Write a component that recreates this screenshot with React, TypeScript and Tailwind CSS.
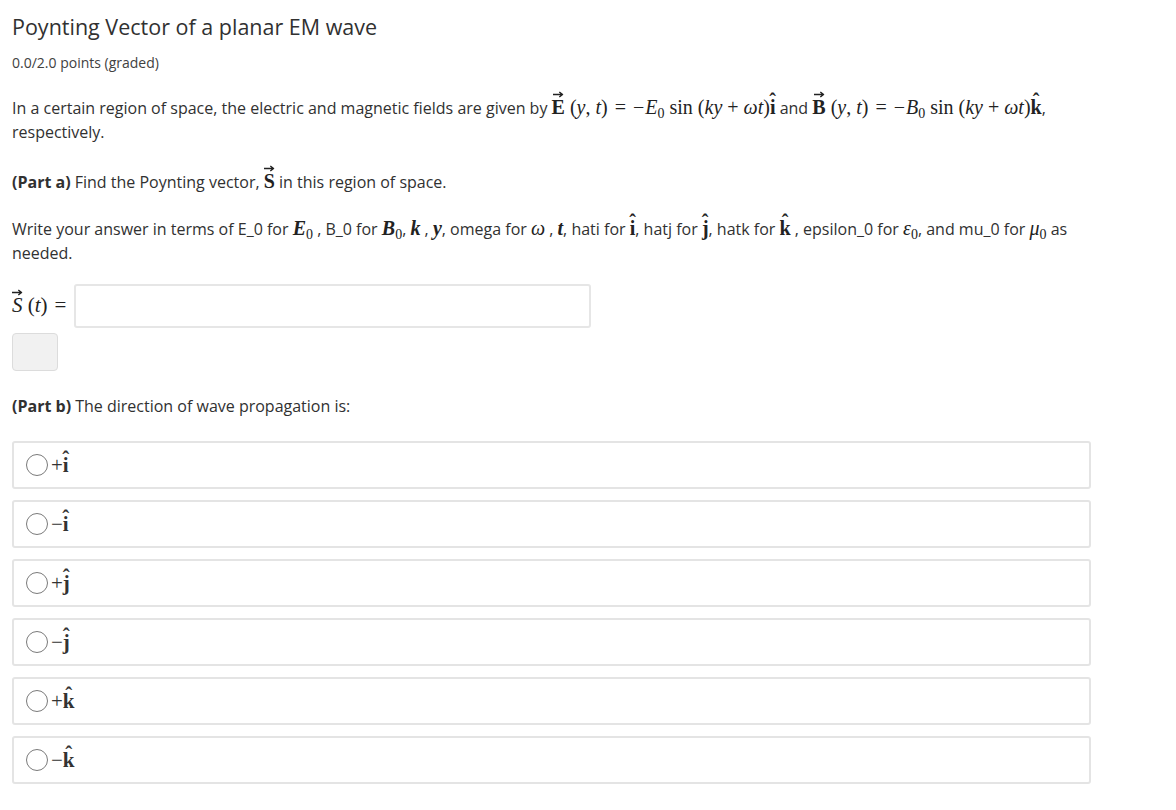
import React from 'react';

const serif = "font-['Liberation_Serif','DejaVu_Serif',serif]";

function Arrow({ children, bold = false }: { children: React.ReactNode; bold?: boolean }) {
  return (
    <span className={`relative inline-block leading-none ${bold ? 'font-bold' : 'italic'}`}>
      <svg
        className="absolute left-1/2 -translate-x-1/2 top-[-0.28em]"
        width="11"
        height="7"
        viewBox="0 0 11 7"
      >
        <path d="M0.5 3.5 H9.5 M6.8 1 L10 3.5 L6.8 6" stroke="#222" strokeWidth="1.4" fill="none" />
      </svg>
      {children}
    </span>
  );
}

function Hat({ children }: { children: React.ReactNode }) {
  return (
    <span className="relative inline-block font-bold leading-none">
      <span className="absolute left-1/2 -translate-x-1/2 top-[-0.3em] text-[1em] font-bold leading-none">ˆ</span>
      {children}
    </span>
  );
}

function M({ children }: { children: React.ReactNode }) {
  return <span className={`${serif} text-[20px] leading-none text-[#222]`}>{children}</span>;
}

function Sub({ children }: { children: React.ReactNode }) {
  return <sub className="text-[14px]">{children}</sub>;
}

const options = [
  { sign: '+', v: 'i' },
  { sign: '−', v: 'i' },
  { sign: '+', v: 'j' },
  { sign: '−', v: 'j' },
  { sign: '+', v: 'k' },
  { sign: '−', v: 'k' },
];

export default function App() {
  return (
    <div className="min-h-[810px] bg-white px-3 pt-[13px] font-['Open_Sans',sans-serif] text-[#313131]">
      <h2 className="text-[21.5px] leading-[27px] text-[#313131]">Poynting Vector of a planar EM wave</h2>
      <div className="mt-[14px] text-[14px] leading-[18px] text-[#414141]">0.0/2.0 points (graded)</div>

      <p className="mt-[24px] text-[16px] leading-[24px]">
        In a certain region of space, the electric and magnetic fields are given by{' '}
        <M>
          <Arrow bold>E</Arrow> (<i>y</i>, <i>t</i>)<span className="mx-[7px]">=</span>−<span className="ml-[1px]" />
          <i>E</i>
          <Sub>0</Sub> sin (<i>ky</i>
          <span className="mx-[5px]">+</span>
          <i>ωt</i>)<Hat>i</Hat>
        </M>{' '}
        and{' '}
        <M>
          <Arrow bold>B</Arrow> (<i>y</i>, <i>t</i>)<span className="mx-[7px]">=</span>−<span className="ml-[1px]" />
          <i>B</i>
          <Sub>0</Sub> sin (<i>ky</i>
          <span className="mx-[5px]">+</span>
          <i>ωt</i>)<Hat>k</Hat>
        </M>
        ,
        <br />
        respectively.
      </p>

      <p className="mt-[26px] text-[16px] leading-[24px]">
        <span className="font-bold">(Part a)</span> Find the Poynting vector,{' '}
        <M>
          <Arrow bold>S</Arrow>
        </M>{' '}
        in this region of space.
      </p>

      <p className="mt-[23px] text-[16px] leading-[24px]">
        Write your answer in terms of E_0 for{' '}
        <M>
          <b><i>E</i></b>
          <Sub>0</Sub>
        </M>{' '}
        , B_0 for{' '}
        <M>
          <b><i>B</i></b>
          <Sub>0</Sub>
        </M>
        ,{' '}
        <M>
          <b><i>k</i></b>
        </M>{' '}
        ,{' '}
        <M>
          <b><i>y</i></b>
        </M>
        , omega for <M><i>ω</i></M> , <M><b><i>t</i></b></M>, hati for <M><Hat>i</Hat></M>, hatj for{' '}
        <M><Hat>j</Hat></M>, hatk for <M><Hat>k</Hat></M> , epsilon_0 for{' '}
        <M>
          <i>ε</i>
          <Sub>0</Sub>
        </M>
        , and mu_0 for{' '}
        <M>
          <i>μ</i>
          <Sub>0</Sub>
        </M>{' '}
        as
        <br />
        needed.
      </p>

      <div className="mt-[19px] flex items-center">
        <span className={`${serif} mr-[8px] text-[21px] text-[#222]`}>
          <Arrow>S</Arrow> (<i>t</i>)<span className="ml-[7px]">=</span>
        </span>
        <input
          className="h-[44px] w-[517px] rounded-[3px] border-2 border-[#e6e6e6] bg-white px-2 outline-none"
          type="text"
        />
      </div>
      <div className="mt-[5px] h-[38px] w-[46px] rounded-[4px] border border-[#dcdcdc] bg-[#f1f1f1]" />

      <p className="mt-[23px] text-[16px] leading-[24px]">
        <span className="font-bold">(Part b)</span> The direction of wave propagation is:
      </p>

      <div className="mt-[23px] flex w-[1079px] flex-col gap-[11px]">
        {options.map((o, i) => (
          <label
            key={i}
            className="flex h-[48px] items-center rounded-[3px] border-2 border-[#e4e4e4] px-[12px]"
          >
            <span className="h-[22px] w-[22px] rounded-full border border-[#7a7a7a] bg-white" />
            <span className={`${serif} ml-[3px] text-[21px] leading-[24px] text-[#333]`}>
              {o.sign}
              <Hat>{o.v}</Hat>
            </span>
          </label>
        ))}
      </div>
    </div>
  );
}
